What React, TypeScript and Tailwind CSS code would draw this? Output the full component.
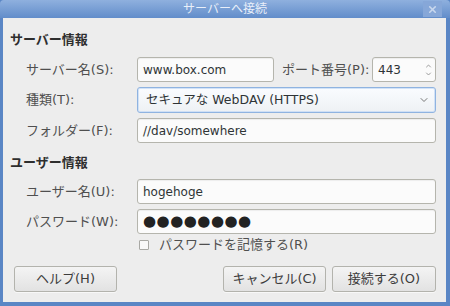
import { ChevronDown, ChevronUp, X } from "lucide-react";

const font = "font-['DejaVu_Sans','Noto_Sans_CJK_JP',sans-serif]";

const field =
  "flex items-center rounded-[3px] border border-[#b5b5ad] bg-[#fbfbfb] px-[5px] text-[12px] text-[#2e3436] shadow-[inset_0_1px_1px_rgba(0,0,0,0.06)]";

function Label({ children }: { children: React.ReactNode }) {
  return (
    <div className="w-[111px] shrink-0 text-[13px] text-[#4f4f4f]">
      {children}
    </div>
  );
}

function Button({ children, className = "" }: { children: React.ReactNode; className?: string }) {
  return (
    <button
      type="button"
      className={`flex h-[26px] items-center justify-center rounded-[3px] border border-[#b3b3ad] bg-gradient-to-b from-[#f4f4f4] to-[#e2e2e2] text-[13px] text-[#3c3c3c] shadow-[0_1px_0_rgba(255,255,255,0.6)] ${className}`}
    >
      {children}
    </button>
  );
}

export default function App() {
  return (
    <div className={`flex h-[306px] w-[450px] flex-col overflow-hidden bg-[#5a86c5] ${font}`}>
      {/* タイトルバー */}
      <div className="relative flex h-[18px] shrink-0 items-center justify-center rounded-t-[4px] bg-gradient-to-b from-[#8fb0de] to-[#628dca]">
        <span className="text-[12px] text-[#e9eff9]">サーバーへ接続</span>
        <div className="absolute right-[8px] top-[1px] flex h-[16px] w-[19px] items-center justify-center bg-[#86a7d8]">
          <X className="h-[11px] w-[11px] text-[#c9d8ee]" strokeWidth={3.5} />
        </div>
      </div>

      {/* 本体 */}
      <div className="mb-[4px] ml-[3px] mr-[4px] flex flex-1 flex-col bg-[#ededed] pl-[7px] pr-[10px] pt-[13px]">
        <div className="h-[18px] text-[13px] font-bold leading-[18px] text-[#2e2e2e]">サーバー情報</div>

        <div className="mt-[8px] flex flex-col gap-[5px] pl-[16px]">
          <div className="flex h-[25px] items-center">
            <Label>サーバー名(S):</Label>
            <div className={`${field} h-[25px] w-[137px]`}>www.box.com</div>
            <div className="ml-[8px] text-[13px] text-[#4f4f4f]">ポート番号(P):</div>
            <div className={`${field} ml-auto h-[25px] w-[64px] justify-between pr-[2px]`}>
              <span>443</span>
              <span className="flex flex-col text-[#8a8a8a]">
                <ChevronUp className="h-[8px] w-[9px]" strokeWidth={2.5} />
                <ChevronDown className="h-[8px] w-[9px]" strokeWidth={2.5} />
              </span>
            </div>
          </div>

          <div className="flex h-[26px] items-center">
            <Label>種類(T):</Label>
            <div className="flex h-[26px] flex-1 items-center justify-between rounded-[3px] border border-[#8fb3e0] bg-gradient-to-b from-[#fafcff] to-[#eef1f4] pl-[8px] pr-[5px] text-[12.5px] text-[#2e3436] shadow-[inset_0_0_0_1px_rgba(200,220,245,0.8)]">
              <span>セキュアな WebDAV (HTTPS)</span>
              <ChevronDown className="h-[12px] w-[12px] text-[#777]" strokeWidth={2} />
            </div>
          </div>

          <div className="flex h-[25px] items-center">
            <Label>フォルダー(F):</Label>
            <div className={`${field} h-[25px] flex-1`}>//dav/somewhere</div>
          </div>
        </div>

        <div className="mt-[11px] h-[18px] text-[13px] font-bold leading-[18px] text-[#2e2e2e]">ユーザー情報</div>

        <div className="mt-[7px] flex flex-col gap-[5px] pl-[16px]">
          <div className="flex h-[25px] items-center">
            <Label>ユーザー名(U):</Label>
            <div className={`${field} h-[25px] flex-1`}>hogehoge</div>
          </div>
          <div className="flex h-[25px] items-center">
            <Label>パスワード(W):</Label>
            <div className={`${field} h-[25px] flex-1 tracking-[0.5px] text-[15px] text-[#222]`}>
              ●●●●●●●●
            </div>
          </div>
        </div>

        <div className="mt-[3px] flex h-[16px] items-center pl-[129px]">
          <div className="h-[10px] w-[10px] rounded-[1px] border border-[#a8a8a4] bg-[#f8f8f8]" />
          <span className="ml-[10px] text-[13px] text-[#4f4f4f]">パスワードを記憶する(R)</span>
        </div>

        <div className="mt-[13px] flex items-center pl-[4px]">
          <Button className="w-[103px]">ヘルプ(H)</Button>
          <Button className="ml-auto w-[103px]">キャンセル(C)</Button>
          <Button className="ml-[6px] w-[104px]">接続する(O)</Button>
        </div>
      </div>
    </div>
  );
}
